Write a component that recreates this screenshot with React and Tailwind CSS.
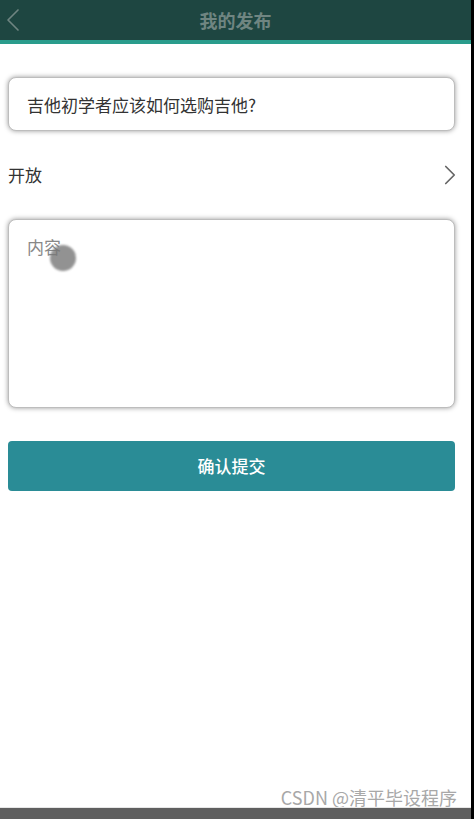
import React, { useState } from 'react';
import { ChevronLeft, ChevronRight } from 'lucide-react';

const App = () => {
  const [title, setTitle] = useState('吉他初学者应该如何选购吉他?');
  const [content, setContent] = useState('');

  return (
    <div className="flex h-screen w-full bg-white font-['Noto_Sans_CJK_SC','Noto_Sans',sans-serif]">
      <div className="flex flex-1 flex-col">
        {/* Header */}
        <div className="flex h-[40px] items-center bg-[#1e4641] border-b-4 border-[#2a9c8c] box-content overflow-hidden">
          <div className="flex w-[40px] text-[#6f8581]">
            <ChevronLeft className="ml-[-7px] h-[40px] w-[40px]" strokeWidth={1} />
          </div>
          <div className="flex-1 text-center text-[18px] font-bold text-[#6f8581]">我的发布</div>
          <div className="w-[40px]" />
        </div>

        {/* Form */}
        <div className="flex flex-col px-[8px] pr-[16px] pt-[33px]">
          <input
            value={title}
            onChange={(e) => setTitle(e.target.value)}
            className="h-[54px] w-full rounded-lg border border-[#bdbdbd] bg-white px-[18px] text-[17px] text-[#333] shadow-[0_0_5px_rgba(0,0,0,0.4)] outline-none"
          />

          <div className="flex h-[88px] items-center justify-between text-[17px] text-[#333]">
            <span>开放</span>
            <ChevronRight className="mr-[-12px] h-[34px] w-[34px] text-[#666]" strokeWidth={1.2} />
          </div>

          <div className="relative">
            <textarea
              value={content}
              onChange={(e) => setContent(e.target.value)}
              placeholder="内容"
              className="block h-[189px] w-full resize-none rounded-lg border border-[#bdbdbd] bg-white px-[18px] py-[14px] text-[17px] text-[#333] placeholder-[#888] shadow-[0_0_5px_rgba(0,0,0,0.4)] outline-none"
            />
            {/* touch indicator */}
            <div className="pointer-events-none absolute left-[42px] top-[26px] h-[26px] w-[26px] rounded-full bg-[#777] opacity-80 blur-[1px]" />
          </div>

          <button className="mt-[33px] h-[50px] w-full rounded-[4px] bg-[#2a8c96] text-[17px] font-medium text-white">
            确认提交
          </button>
        </div>

        <div className="flex-1" />

        {/* Watermark */}
        <div className="flex justify-end pr-[14px] text-[18px] leading-[20px] text-[#a8a8a8]">
          CSDN @清平毕设程序
        </div>
        <div className="h-[1px] bg-[#e6e6e6]" />
        <div className="h-[11px] bg-[#5f5f5f]" />
      </div>
      <div className="w-[3px] bg-black" />
    </div>
  );
};

export default App;
